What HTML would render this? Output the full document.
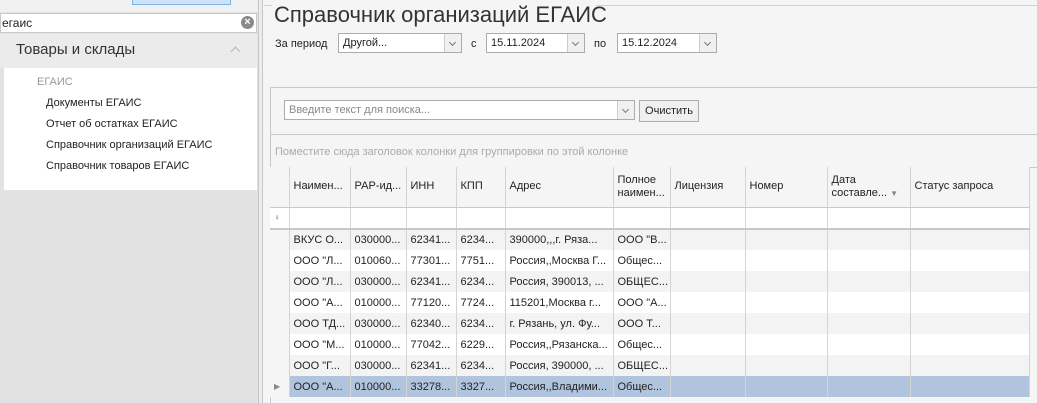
<!DOCTYPE html>
<html><head><meta charset="utf-8"><style>
*{margin:0;padding:0;box-sizing:border-box}
body{width:1037px;height:403px;overflow:hidden;background:#f5f5f5;font-family:"Liberation Sans","DejaVu Sans",sans-serif;font-size:11px;color:#222;position:relative}
.a{position:absolute}
.t{position:absolute;white-space:nowrap}
.cb{position:absolute;background:#fff;border:1px solid #acacac;height:20px;font-size:11px;padding:3px 4px}
.cb i{position:absolute;right:0;top:0;width:17px;height:18px;border-left:1px solid #ccc;background:#f0f0f0}
.cb i:after{content:"";position:absolute;left:5px;top:6px;width:4px;height:4px;border-right:1.3px solid #777;border-bottom:1.3px solid #777;transform:rotate(45deg)}
table{border-collapse:collapse;position:absolute;left:270px;top:167px;table-layout:fixed;width:759px}
td{border-right:1px solid #d4d4d4;white-space:nowrap;overflow:hidden;padding:0 4px;font-size:11px;height:21px}
tr.h td{height:40px;background:#f5f5f5;border-bottom:1px solid #c8c8c8;color:#222;line-height:13px}
tr.f td{height:22px;background:#fff;border-bottom:2px solid #c8c8c8}
tr.g td{background:#f3f3f3}
tr.w td{background:#fff}
tr.s td{background:#b1c4dd}
</style></head><body>
<div class="a" style="left:0;top:0;width:258px;height:403px;background:#e2e2e2"></div>
<div class="a" style="left:0;top:0;width:258px;height:12px;background:#f0f0f0"></div>
<div class="a" style="left:132px;top:0;width:99px;height:5px;background:#cde3f7;border:1px solid #7eb4ea;border-top:none"></div>
<div class="a" style="left:0;top:13px;width:257px;height:20px;background:#fff;border:1px solid #c9c9c9"></div>
<div class="t" style="left:2px;top:16px;font-size:12px">егаис</div>
<div class="a" style="left:241px;top:16px;width:13px;height:13px;border-radius:50%;background:#8a8a8a;color:#fff;font-size:11px;line-height:13px;text-align:center;font-weight:bold">×</div>
<div class="a" style="left:0;top:34px;width:257px;height:34px;background:#ebebeb"></div>
<div class="t" style="left:16px;top:41px;font-size:15px;color:#333">Товары и склады</div>
<div class="a" style="left:232px;top:48px;width:7px;height:7px;border-left:1.5px solid #b5b5b5;border-top:1.5px solid #b5b5b5;transform:rotate(45deg)"></div>
<div class="a" style="left:4px;top:68px;width:253px;height:122px;background:#fff"></div>
<div class="t" style="left:37px;top:76px;color:#999">ЕГАИС</div>
<div class="t" style="left:46px;top:97px">Документы ЕГАИС</div>
<div class="t" style="left:46px;top:118px">Отчет об остатках ЕГАИС</div>
<div class="t" style="left:46px;top:139px">Справочник организаций ЕГАИС</div>
<div class="t" style="left:46px;top:160px">Справочник товаров ЕГАИС</div>
<div class="a" style="left:258px;top:0;width:5px;height:403px;background:#ececec;border-left:1px solid #c8c8c8;border-right:1px solid #c8c8c8"></div>
<div class="a" style="left:264px;top:5px;width:8px;border-top:1px solid #cfcfcf"></div>
<div class="a" style="left:596px;top:5px;width:441px;border-top:1px solid #cfcfcf"></div>
<div class="t" style="left:274px;top:2px;font-size:22px;color:#333">Справочник организаций ЕГАИС</div>
<div class="t" style="left:275px;top:38px">За период</div>
<div class="cb" style="left:338px;top:33px;width:124px">Другой...<i></i></div>
<div class="t" style="left:471px;top:38px">с</div>
<div class="cb" style="left:486px;top:33px;width:99px">15.11.2024<i></i></div>
<div class="t" style="left:594px;top:38px">по</div>
<div class="cb" style="left:617px;top:33px;width:100px">15.12.2024<i></i></div>
<div class="a" style="left:270px;top:87px;width:767px;height:316px;border-left:1px solid #c8c8c8;border-top:1px solid #c8c8c8;background:#f5f5f5"></div>
<div class="a" style="left:271px;top:134px;width:766px;border-top:1px solid #c8c8c8"></div>
<div class="a" style="left:271px;top:167px;width:766px;border-top:1px solid #c8c8c8"></div>
<div class="cb" style="left:284px;top:100px;width:351px;color:#888">Введите текст для поиска...<i></i></div>
<div class="a" style="left:639px;top:100px;width:60px;height:22px;border:1px solid #acacac;background:#f0f0f0;text-align:center;line-height:20px">Очистить</div>
<div class="t" style="left:275px;top:146px;color:#aaa">Поместите сюда заголовок колонки для группировки по этой колонке</div>
<table>
<colgroup><col style="width:19px"><col style="width:61px"><col style="width:56px"><col style="width:50px"><col style="width:49px"><col style="width:108px"><col style="width:57px"><col style="width:75px"><col style="width:82px"><col style="width:83px"><col style="width:119px"></colgroup>
<tr class="h"><td></td><td>Наимен...</td><td>РАР-ид...</td><td>ИНН</td><td>КПП</td><td>Адрес</td><td>Полное<br>наимен...</td><td>Лицензия</td><td>Номер</td><td>Дата<br>составле... <span style="color:#888;font-size:8px">▼</span></td><td>Статус запроса</td></tr>
<tr class="f"><td style="font-size:8px;color:#555">♀</td><td></td><td></td><td></td><td></td><td></td><td></td><td></td><td></td><td></td><td></td></tr>
<tr class="g"><td style="background:#f5f5f5"></td><td>ВКУС О...</td><td>030000...</td><td>62341...</td><td>6234...</td><td>390000,,,г. Ряза...</td><td>ООО "В...</td><td></td><td></td><td></td><td></td></tr>
<tr class="w"><td style="background:#f5f5f5"></td><td>ООО "Л...</td><td>010060...</td><td>77301...</td><td>7751...</td><td>Россия,,Москва Г...</td><td>Общес...</td><td></td><td></td><td></td><td></td></tr>
<tr class="g"><td style="background:#f5f5f5"></td><td>ООО "Л...</td><td>030000...</td><td>62341...</td><td>6234...</td><td>Россия, 390013, ...</td><td>ОБЩЕС...</td><td></td><td></td><td></td><td></td></tr>
<tr class="w"><td style="background:#f5f5f5"></td><td>ООО "А...</td><td>010000...</td><td>77120...</td><td>7724...</td><td>115201,Москва г...</td><td>ООО "А...</td><td></td><td></td><td></td><td></td></tr>
<tr class="g"><td style="background:#f5f5f5"></td><td>ООО ТД...</td><td>030000...</td><td>62340...</td><td>6234...</td><td>г. Рязань, ул. Фу...</td><td>ООО Т...</td><td></td><td></td><td></td><td></td></tr>
<tr class="w"><td style="background:#f5f5f5"></td><td>ООО "М...</td><td>010000...</td><td>77042...</td><td>6229...</td><td>Россия,,Рязанска...</td><td>Общес...</td><td></td><td></td><td></td><td></td></tr>
<tr class="g"><td style="background:#f5f5f5"></td><td>ООО "Г...</td><td>030000...</td><td>62341...</td><td>6234...</td><td>Россия, 390000, ...</td><td>ОБЩЕС...</td><td></td><td></td><td></td><td></td></tr>
<tr class="s"><td style="background:#f5f5f5;color:#888;font-size:8px">▶</td><td>ООО "А...</td><td>010000...</td><td>33278...</td><td>3327...</td><td>Россия,,Владими...</td><td>Общес...</td><td></td><td></td><td></td><td></td></tr>
</table>
</body></html>
